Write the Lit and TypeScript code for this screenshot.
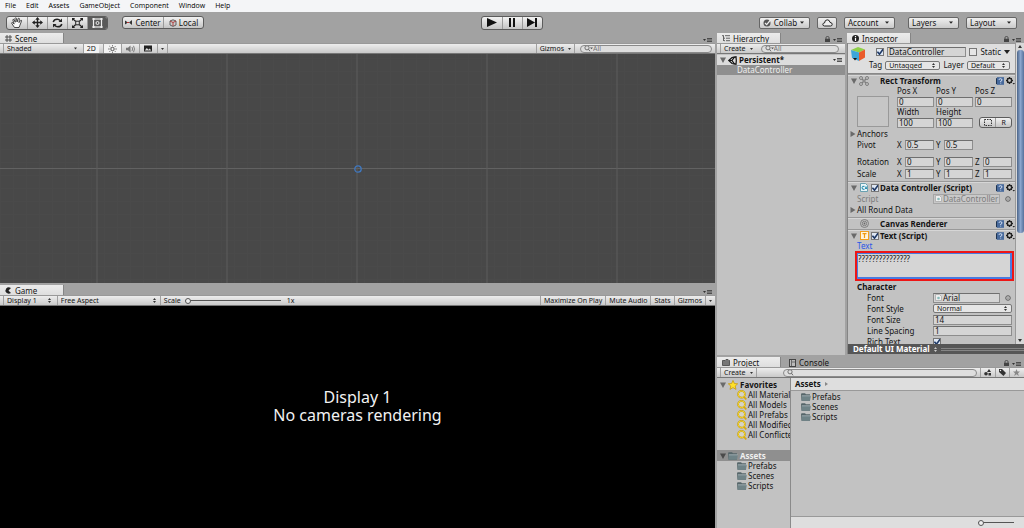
import { LitElement, html, css, svg } from "lit";
import { customElement } from "lit/decorators.js";
import { classMap } from "lit/directives/class-map.js";

const draw = (w: number, h: number, body: unknown) =>
  html`<svg class="ico" width=${w} height=${h} viewBox="0 0 ${w} ${h}" aria-hidden="true">${body}</svg>`;

const caret = () => draw(4, 3, svg`<path d="M0 .5H4L2 2.800Z" fill="#222"/>`);
const drop = () => draw(3, 2, svg`<path d="M0 0H3L1.500 2Z" fill="#333"/>`);
const fold = (open: boolean, tone = "#6a6a6a") =>
  draw(6, 6, open ? svg`<path d="M0 .5H6L3 6Z" fill=${tone}/>` : svg`<path d="M.5 0V6L5.500 3Z" fill=${tone}/>`);
const folder = () =>
  draw(10, 8, svg`<path d="M0 1.500L.5 .3H4L5 1.300H9V7.700H.5Z" fill="#56666a"/><path d="M.8 2.800H9.800L9 7.700H.5Z" fill="#6f8387"/><path d="M.8 2.800H9.700" stroke="#b4c2c4" stroke-width=".7"/>`);
const finder = () =>
  draw(10, 10, svg`<circle cx="4.500" cy="4.300" r="3.400" fill="#d6d3c4" stroke="#b8961c" stroke-width="1.700"/><circle cx="4.500" cy="4.300" r="3.400" fill="none" stroke="#f8d62a" stroke-width="1"/><path d="M6.900 6.800L9.300 9.300" stroke="#d8a80c" stroke-width="1.700"/>`);
const unity = () =>
  draw(9, 9, svg`<path d="M.8 4.500L4 1.500L8 .8L8.300 4.500L8 8.200L4 7.500Z" fill="none" stroke="#111" stroke-width="1.200"/><path d="M4 4.500H.8M4 4.500L6.500 .8M4 4.500L6.500 8.200" stroke="#111" stroke-width="1.200"/>`);
const lock = () =>
  draw(5, 6, svg`<path d="M0 2.800H5V6H0Z" fill="#444"/><path d="M1 3V1.600Q1 .5 2.500 .5T4 1.600V3" fill="none" stroke="#444" stroke-width=".9"/>`);
const menu = () =>
  draw(9, 4, svg`<path d="M0 1H3L1.500 3Z" fill="#333"/><path d="M4 .5H9M4 2H9M4 3.500H9" stroke="#444" stroke-width=".9"/>`);
const lens = () =>
  draw(9, 7, svg`<circle cx="3" cy="2.800" r="2.100" fill="none" stroke="#666" stroke-width=".9"/><path d="M4.500 4.300L6 6.300" stroke="#666"/><path d="M6 2.500H9L7.500 4.300Z" fill="#555"/>`);
const help = () =>
  draw(8, 8, svg`<path d="M0 1.500L1.500 .5V7.500L0 7Z" fill="#1e3350"/><rect x="1" y=".2" width="7" height="7.600" fill="#486a9c"/><path d="M3 2.800Q3 1.700 4.500 1.700T6 3Q6 3.700 4.700 4.200V5M4.700 5.700V6.500" fill="none" stroke="#e6f0ff" stroke-width=".9"/>`);
const gear = () =>
  draw(9, 8, svg`<circle cx="3.500" cy="3.500" r="2.200" fill="none" stroke="#222" stroke-width="1.500"/><path d="M3.500 0V1.300M3.500 5.700V7M0 3.500H1.300M5.700 3.500H7M1 1L2 2M5 5L6 6M6 1L5 2M1 6L2 5" stroke="#222" stroke-width="1"/><path d="M6.500 6H9L7.800 7.500Z" fill="#222"/>`);

const hierarchyIcon = () =>
  draw(8, 7, svg`<path d="M0 .7H2M3 .7H8M2 3.200H3M4 3.200H8M2 5.700H3M4 5.700H8M1.500 1V6" stroke="#555" stroke-width=".9" fill="none"/>`);

@customElement("app-root")
export class AppRoot extends LitElement {
  static styles = css`
    :host { display: flex; flex-direction: column; height: 100vh; overflow: hidden; background: #a2a2a2; color: #141414;
      font: 8px/10px "Noto Sans", "Open Sans", sans-serif; --line: #858585; --panel: #c2c2c2; cursor: default; }
    *, *::before { box-sizing: border-box; }
    button, input, select, textarea { font: inherit; color: inherit; margin: 0; padding: 0; border: 0; border-radius: 0; background: none; min-width: 0; outline: 0; }
    select { appearance: none; }
    .ico { flex: none; display: block; overflow: visible; }
    .grow { flex: 1; min-width: 0; }
    .menubar { display: flex; gap: 10px; height: 12px; padding: 0 5px; background: #f4f5f7; font: 7px/12px "Open Sans", sans-serif; }
    .menubar button { color: #000; white-space: nowrap; }
    .tools { display: grid; grid-template-columns: 1fr auto 1fr; align-items: center; height: 21px; padding: 0 7px 0 6px; }
    .side { display: flex; align-items: center; gap: 14px; }
    .right { justify-content: flex-end; gap: 7px; }
    .right .wide { margin-left: 6px; }
    .group { display: flex; border: 1px solid #5c5c5c; border-radius: 3px; overflow: hidden; background: linear-gradient(#f2f2f2, #c4c4c4); }
    .group button { display: flex; align-items: center; justify-content: center; gap: 2px; width: 20px; height: 12px; border-left: 1px solid #9a9a9a; }
    .group button:first-child { border-left: 0; }
    .group .on { background: #5a5a5a; }
    .group .word { width: 40px; height: 11px; }
    .push { display: flex; align-items: center; justify-content: space-between; width: 51px; height: 12px; padding: 0 5px 0 3px; border: 1px solid #666; border-radius: 2px; background: linear-gradient(#efefef, #cacaca); }
    .cloud { width: 20px; justify-content: center; padding: 0; }
    .body { flex: 1; min-height: 0; display: grid; grid-template-columns: minmax(0, 1fr) 307px; gap: 2px; }
    .column { display: grid; min-height: 0; gap: 2px; }
    .views { grid-template-rows: minmax(0, 250fr) minmax(0, 243fr); }
    .docks { grid-template-rows: minmax(0, 322fr) minmax(0, 171fr); }
    .upper { display: grid; grid-template-columns: 128px minmax(0, 1fr); gap: 2px; min-height: 0; }
    .panel { display: flex; flex-direction: column; min-width: 0; min-height: 0; overflow: hidden; }
    .tabs { display: flex; align-items: flex-end; height: 10px; flex: none; padding-right: 3px; gap: 3px; }
    .tabs > .ico { margin-bottom: 1px; }
    .tab { display: flex; align-items: center; gap: 3px; width: 64px; height: 10px; padding: 1px 0 0 5px; white-space: nowrap; }
    .tab.active { background: linear-gradient(#ececec, #dedede); border-right: 1px solid var(--line); }
    .bar { display: flex; align-items: stretch; height: 11px; flex: none; font-size: 7px; line-height: 9px; background: linear-gradient(#ededed, #c9c9c9); border-top: 1px solid #999; border-bottom: 1px solid #777; padding-left: 3px; }
    .bar > * { border-left: 1px solid #a0a0a0; white-space: nowrap; }
    .bar > .plain { border-left: 0; }
    .bar button { display: flex; align-items: center; justify-content: center; gap: 4px; padding: 0 3px; }
    .bar .pic { padding: 0 4px; }
    .bar button.lit { background: #f3f3f3; }
    .bar select, .pop { background-repeat: no-repeat; background-position: right 4px center; background-size: 3px 5px; }
    .updown { background-image: url("data:image/svg+xml,%3Csvg xmlns='http://www.w3.org/2000/svg' viewBox='0 0 3 5'%3E%3Cpath d='M0 2L1.500 0L3 2ZM0 3L1.500 5L3 3Z' fill='%23333'/%3E%3C/svg%3E"); }
    .down { background-image: url("data:image/svg+xml,%3Csvg xmlns='http://www.w3.org/2000/svg' viewBox='0 0 3 5'%3E%3Cpath d='M0 1.500H3L1.500 3.500Z' fill='%23333'/%3E%3C/svg%3E"); }
    .search { display: flex; align-items: center; height: 8px; border-radius: 5px; background: #dedede; padding-left: 3px; overflow: hidden; font-size: 7px; align-self: center; }
    .search input { flex: 1; height: 7px; line-height: 7px; }
    .search input::placeholder { color: #777; opacity: 1; }
    .shade { width: 78px; padding-left: 3px; }
    .w-display { width: 52px; padding-left: 3px; }
    .w-aspect { width: 103px; padding-left: 3px; }
    .scene { flex: 1; display: grid; place-items: center; background-color: #484848;
      background-image: linear-gradient(90deg, transparent 64px, #5c5c5c 64px, #5c5c5c 65px, transparent 65px), linear-gradient(transparent 114px, #626262 114px, #626262 115px, transparent 115px), linear-gradient(90deg, #4a4a4a 1px, transparent 1px), linear-gradient(#4a4a4a 1px, transparent 1px);
      background-size: 130px 130px, 100% 229px, 13px 13px, 13px 13px; background-position: center, center, center, center; background-repeat: repeat, no-repeat, repeat, repeat; }
    .game { flex: 1; display: grid; place-content: center; padding-bottom: 22px; background: #000; color: #f2f2f2; font-size: 16px; line-height: 18px; text-align: center; }
    .range { appearance: none; height: 8px; background: linear-gradient(#555, #555) center / 100% 1px no-repeat; }
    .range::-webkit-slider-thumb { appearance: none; width: 6px; height: 6px; border: 1px solid #555; border-radius: 50%; background: #eee; }
    .scale { display: flex; align-items: center; gap: 4px; padding-left: 3px; }
    .scale .range { width: 96px; }
    .scale output { padding-left: 2px; }
    .fill { flex: 1; background: var(--panel); }
    .row { display: flex; align-items: center; gap: 2px; height: 10px; white-space: nowrap; padding-left: 3px; flex: none; }
    .row.child { padding-left: 20px; gap: 1px; }
    .row b { font-weight: 700; }
    .scenehead { background: #dcdcdc; padding-right: 3px; margin-top: 1px; }
    .selected { background: #8f8f8f; color: #f0f0f0; }
    .inspect { flex: 1; display: flex; min-height: 0; background: var(--panel); border-left: 1px solid var(--line); }
    .props { flex: 1; min-width: 0; overflow: hidden; }
    .scroll { width: 9px; display: flex; flex-direction: column; align-items: center; justify-content: space-between; background: #d8d8d8; border-left: 1px solid #999; padding: 2px 0; }
    .thumb { width: 7px; flex: 1; margin: 2px 0 0; border-radius: 3px; background: linear-gradient(90deg, #4c6589, #8ba6cd, #56719b); }
    .rail { width: 6px; height: 106px; }
    .object { display: grid; grid-template-columns: 14px minmax(0, 1fr); gap: 4px; height: 31px; padding: 3px 5px 0 3px; background: #dedede; border-bottom: 1px solid #888; border-top: 1px solid #999; }
    .lines { display: grid; grid-template-columns: minmax(0, 1fr); grid-template-rows: 10px 10px; gap: 3px; }
    .line { display: flex; align-items: center; gap: 3px; }
    .line label { display: flex; align-items: center; gap: 3px; }
    .line .active-box { padding-left: 7px; }
    .line .layer { width: 43px; }
    .check { appearance: none; width: 8px; height: 8px; border: 1px solid #777; background: #e6e6e6; flex: none; }
    .check:checked { background: #dfe8f4 url("data:image/svg+xml,%3Csvg xmlns='http://www.w3.org/2000/svg' viewBox='0 0 8 8'%3E%3Cpath d='M1 3.500L3.200 6L7 .8' fill='none' stroke='%23203a66' stroke-width='1.700'/%3E%3C/svg%3E") center / 7px 7px no-repeat; }
    .field { height: 10px; line-height: 7px; border: 1px solid #8d8d8d; border-top-color: #6f6f6f; background: #d5d5d5; padding: 0 1px 1px; }
    .pop { height: 9px; font-size: 7px; line-height: 7px; border: 1px solid #777; border-radius: 2px; padding: 0 3px; background-color: #e6e6e6; }
    .head { display: grid; grid-template-columns: 6px 10px 8px minmax(0, 1fr) 8px 9px; gap: 2px; align-items: center; height: 12px; padding: 0 0 0 3px; font-weight: 700; border-top: 1px solid #999; box-shadow: inset 0 1px #d6d6d6; white-space: nowrap; }
    .head > :nth-child(4) { margin-left: -1px; }
    .head .ico { justify-self: center; }
    .rect { display: grid; grid-template-columns: 38px repeat(3, 37px); column-gap: 2px; padding: 0 0 0 9px; grid-template-rows: 10px 11px 10px 11px; align-items: center; }
    .rect .frame { grid-row: 2 / 5; width: 32px; height: 31px; border: 1px solid #999; align-self: start; background: #c6c6c6; }
    .rect .field { width: 37px; }
    .rect .mode { grid-column: 4; grid-row: 4; width: 33px; justify-self: end; }
    .mode button { width: 16px; height: 9px; font-size: 7px; }
    .prop { display: flex; align-items: center; height: 12px; padding-left: 9px; white-space: nowrap; }
    .prop .name { width: 40px; flex: none; }
    .prop .axis { display: flex; align-items: center; width: 39px; justify-content: space-between; padding-right: 2px; }
    .axis .field { width: 29px; }
    .foldout { padding-left: 2px; gap: 1px; height: 11px; }
    .gap { height: 5px; }
    .gap.small { height: 2px; }
    .gap.tiny { height: 1px; }
    .prop.wide-name { height: 11px; }
    .wide-name .name { width: 76px; }
    .prop.indent { padding-left: 19px; height: 11px; }
    .indent .name { width: 66px; }
    .object-field { display: flex; align-items: center; gap: 1px; width: 67px; margin-right: 5px; overflow: hidden; }
    .dim { color: #7d7d7d; }
    .dim .object-field { border-color: #a5a5a5; background: #c8c8c8; }
    .indent .pop, .indent .num { flex: none; width: 79px; }
    .text-label { display: block; padding-left: 9px; color: #2a56e8; height: 10px; line-height: 10px; }
    .alert { margin: 0 1px 0 7px; border: 2px solid #ee1616; height: 30px; display: flex; }
    .alert textarea { flex: 1; resize: none; border: 1px solid #4a7be0; border-bottom-width: 2px; border-right-width: 2px; background: #d5d5d5; line-height: 9px; padding: 0 0 1px; overflow: hidden; }
    .prop.strong { font-weight: 700; height: 11px; }
    .material { display: flex; align-items: center; gap: 4px; height: 10px; margin-bottom: 1px; padding-left: 5px; background: #565656; color: #fff; font-weight: 700; border-left: 1px solid var(--line); white-space: nowrap; flex: none; }
    .grip { flex: 1; height: 3px; border-top: 1px solid #858585; border-bottom: 1px solid #858585; }
    .project { flex: 1; display: grid; grid-template-columns: 74px minmax(0, 1fr); background: var(--panel); min-height: 0; }
    .tree { border-right: 1px solid #8a8a8a; overflow: hidden; padding-top: 1px; }
    .tree .root { margin-top: 10px; height: 11px; }
    .tree .first { height: 11px; }
    .assets { display: flex; flex-direction: column; min-height: 0; }
    .assets .row { padding-left: 10px; }
    .crumb { display: flex; align-items: center; gap: 4px; height: 13px; padding-left: 4px; background: #dedede; border-bottom: 1px solid #999; font-weight: 700; }
    .listing { flex: 1; padding-top: 1px; }
    .foot { display: flex; align-items: center; justify-content: flex-end; height: 12px; padding-right: 10px; background: #dedede; border-top: 1px solid #999; }
    .foot .range { width: 36px; }
    .bar > .search { border: 1px solid #8a8a8a; }
    .bar .find { flex: 1; margin: 0 3px 0 26px; }
    .project-bar .pic { padding: 0 3px; }
    .bar .find-scene { width: 132px; margin: 0 3px 0 5px; }
    .bar .find-h { flex: 1; margin: 0 6px 0 5px; }
  `;

  private head(title: string, icon: unknown, open: boolean | null, check = false) {
    return html`<div class="head">${open === null ? html`<i></i>` : fold(open)}${icon}
      ${check ? html`<input class="check" type="checkbox" checked aria-label="Enable ${title}">` : html`<i></i>`}
      <span>${title}</span>${help()}${gear()}</div>`;
  }

  private axes(name: string, values: string[]) {
    return html`<div class="prop"><span class="name">${name}</span>
      ${values.map((v, i) => html`<label class="axis">${"XYZ"[i]}<input class="field" .value=${v}></label>`)}</div>`;
  }

  private row(text: string, icon: unknown) {
    return html`<div class="row child">${icon}<span>${text}</span></div>`;
  }

  private topTools() {
    const c = draw(8, 7, svg`<path d="M0 1.500L3 3.500L0 5.500ZM4 3.500L7 1V6Z" fill="#333"/><path d="M2 3.500H4" stroke="#b33"/>`);
    const l = draw(8, 8, svg`<path d="M1 2L4 .8L7 2V6L4 7.400L1 6Z" fill="#ccc" stroke="#555" stroke-width=".9"/><path d="M1 2L4 3.500L7 2M4 3.500V7" fill="none" stroke="#a33" stroke-width=".9"/>`);
    const tools: [string, unknown][] = [
      ["Hand", draw(12, 11, svg`<path d="M3.500 10.500L.8 6.500Q.4 5.300 1.600 5.600L3.200 7L1.800 3Q1.900 1.900 2.900 2.500L4.300 5.200L4 1.300Q4.500 .2 5.300 1.200L6.100 5L7.200 1.400Q8 .7 8.400 1.700L8 5.600L9.800 3.300Q10.800 3.100 10.500 4.200L8.800 8.500L8 10.500Z" fill="#fafafa" stroke="#222" stroke-width=".8"/>`)],
      ["Move", draw(11, 11, svg`<path d="M5.500 1.500V9.500M1.500 5.500H9.500" stroke="#222" stroke-width="1.400"/><path d="M5.500 0L7.700 2.800H3.300ZM5.500 11L7.700 8.200H3.300ZM0 5.500L2.800 3.300V7.700ZM11 5.500L8.200 3.300V7.700Z" fill="#222"/>`)],
      ["Rotate", draw(11, 10, svg`<path d="M1.200 4Q2 1.200 5.200 1.200Q7 1.200 8.500 2.700M9.800 6Q9 8.800 5.800 8.800Q4 8.800 2.500 7.300" fill="none" stroke="#222" stroke-width="1.500"/><path d="M10 .5V4H6.500ZM1 9.500V6H4.500Z" fill="#222"/>`)],
      ["Scale", draw(11, 10, svg`<rect x="3.700" y="3.200" width="3.600" height="3.600" fill="none" stroke="#222"/><path d="M1 1L3.500 3.300M10 1L7.500 3.300M1 9L3.500 6.700M10 9L7.500 6.700" stroke="#222" stroke-width="1.200"/><path d="M0 0H3.200L0 3ZM11 0H7.800L11 3ZM0 10H3.200L0 7ZM11 10H7.800L11 7Z" fill="#222"/>`)],
      ["Rect", draw(11, 10, svg`<rect x="1.500" y="1" width="8" height="8" fill="none" stroke="#eee" stroke-width="1.200"/><circle cx="5.500" cy="5" r="1.500" fill="none" stroke="#eee"/><path d="M.5 0H2.500V2H.5ZM8.500 0H10.500V2H8.500ZM.5 8H2.500V10H.5ZM8.500 8H10.500V10H8.500Z" fill="#eee"/>`)],
    ];
    return html`<div class="tools">
      <div class="side"><div class="group">${tools.map(([n, i]) => html`<button class=${classMap({ on: n === "Rect" })} aria-label=${n}>${i}</button>`)}</div>
        <div class="group"><button class="word">${c}Center</button><button class="word">${l}Local</button></div></div>
      <div class="group">
        <button aria-label="Play">${draw(10, 9, svg`<path d="M0 0L10 4.500L0 9Z" fill="#111"/>`)}</button>
        <button aria-label="Pause">${draw(6, 9, svg`<path d="M0 0H2V9H0ZM4 0H6V9H4Z" fill="#111"/>`)}</button>
        <button aria-label="Step">${draw(10, 9, svg`<path d="M0 0L8 4.500L0 9ZM8 0H10V9H8Z" fill="#111"/>`)}</button></div>
      <div class="side right">
        <button class="push">${draw(8, 8, svg`<circle cx="4" cy="4" r="3.500" fill="#555"/><path d="M2 4L3.700 5.700L7.500 1" fill="none" stroke="#eee" stroke-width="1.200"/>`)}Collab ${caret()}</button>
        <button class="push cloud" aria-label="Services">${draw(11, 8, svg`<path d="M2.500 7Q.6 6.800 .8 5.200Q1 4 2.500 4Q2.800 1 5.200 .8Q7.600 .8 8 3.400Q10.200 3.600 10.200 5.300Q10.200 7 8.500 7Z" fill="#eee" stroke="#222"/>`)}</button>
        <button class="push">Account ${caret()}</button><button class="push wide">Layers ${caret()}</button><button class="push">Layout ${caret()}</button>
      </div></div>`;
  }

  private scene() {
    return html`<section class="panel">
      <div class="tabs"><div class="tab active">${draw(7, 7, svg`<path d="M2 0V7M5 0V7M0 2H7M0 5H7" stroke="#444" stroke-width=".9"/>`)}Scene</div><span class="grow"></span>${menu()}</div>
      <div class="bar">
        <select class="shade down" aria-label="Draw mode"><option>Shaded</option></select>
        <span class="plain">&nbsp;</span><button class="lit">2D</button><span class="plain">&nbsp;&nbsp;</span>
        <button class="lit pic" aria-label="Lighting">${draw(9, 8, svg`<circle cx="4.500" cy="4" r="1.700" fill="none" stroke="#444" stroke-width=".9"/><path d="M4.500 0V1.300M4.500 6.700V8M0 4H1.800M7.200 4H9M1.300 1L2.500 2.200M7.700 1L6.500 2.200M1.300 7L2.500 5.800M7.700 7L6.500 5.800" stroke="#666" stroke-width=".8"/>`)}</button>
        <button class="pic" aria-label="Audio">${draw(9, 8, svg`<path d="M0 2.700H2L4.500 .5V7.500L2 5.300H0Z" fill="#777"/><path d="M6 2Q7.200 4 6 6M7.500 .8Q9.500 4 7.500 7.200" fill="none" stroke="#777" stroke-width=".9"/>`)}</button>
        <button class="pic" aria-label="Effects">${draw(9, 7, svg`<rect y=".5" width="8" height="6" fill="#222"/><path d="M.8 5.500L2.800 3L4.500 4.700L5.800 3.500L7.200 5.500Z" fill="#ddd"/>`)}</button>
        <button aria-label="Effects menu">${drop()}</button>
        <span class="grow"></span>
        <button>Gizmos ${drop()}</button><span></span>
        <label class="search find-scene">${lens()}<input placeholder="All" aria-label="Search scene"></label></div>
      <div class="scene">${draw(8, 8, svg`<circle cx="4" cy="4" r="3.200" fill="none" stroke="#3f78c0" stroke-width="1.300"/>`)}</div>
    </section>`;
  }

  private game() {
    return html`<section class="panel">
      <div class="tabs"><div class="tab active">${draw(7, 7, svg`<path d="M6 1Q3 -.5 1.200 1.500Q-.3 3.500 1.200 5.500Q3 7.500 6 6L3.500 3.500Z" fill="#222"/>`)}Game</div><span class="grow"></span>${menu()}</div>
      <div class="bar">
        <select class="w-display updown" aria-label="Display"><option>Display 1</option></select><span class="plain">&nbsp;</span>
        <select class="w-aspect updown" aria-label="Aspect"><option>Free Aspect</option></select>
        <label class="scale">Scale<input class="range" type="range" min="0" max="100" value="0"><output>1x</output></label>
        <span class="grow plain"></span>
        <button>Maximize On Play</button><button>Mute Audio</button><button>Stats</button><button>Gizmos</button><button aria-label="Gizmos menu">${drop()}</button></div>
      <div class="game"><div>Display 1</div><div>No cameras rendering</div></div>
    </section>`;
  }

  private hierarchy() {
    return html`<section class="panel">
      <div class="tabs"><div class="tab active">${hierarchyIcon()}Hierarchy</div><span class="grow"></span>${lock()}${menu()}</div>
      <div class="bar"><button>Create ${drop()}</button>
        <label class="search find-h">${lens()}<input placeholder="All" aria-label="Search hierarchy"></label></div>
      <div class="fill"><div class="row scenehead">${fold(true)}${unity()}<b class="grow">Persistent*</b>${menu()}</div>
        <div class="row child selected">DataController</div></div>
    </section>`;
  }

  private inspector() {
    const pos = ["Pos X", "Pos Y", "Pos Z"];
    const anchor = draw(10, 10, svg`<g fill="none" stroke="#777" stroke-width=".9"><circle cx="2" cy="2" r="1.500"/><circle cx="8" cy="2" r="1.500"/><circle cx="2" cy="8" r="1.500"/><circle cx="8" cy="8" r="1.500"/><path d="M3 3L4 4H6L7 3M3 7L4 6H6L7 7M4 4V6M6 4V6"/></g>`);
    const script = draw(8, 9, svg`<path d="M.5 .5H5.500L7.500 2.500V8.500H.5Z" fill="#e8f4f8" stroke="#68a0b0"/><path d="M4.500 3.300Q2 2.700 2 4.800T4.500 6.300M5 4.200H7M5 5.400H7" fill="none" stroke="#1684a8"/>`);
    const page = draw(7, 7, svg`<path d="M.5 .5H4.500L6.500 2.500V6.500H.5Z" fill="#eee" stroke="#aaa" stroke-width=".8"/><circle cx="3.500" cy="4" r="1.300" fill="#8bb"/>`);
    const target = draw(6, 6, svg`<circle cx="3" cy="3" r="2.300" fill="none" stroke="#555" stroke-width=".9"/><circle cx="3" cy="3" r=".6" fill="#555"/>`);
    return html`<section class="panel">
      <div class="tabs"><div class="tab active">${draw(7, 7, svg`<circle cx="3.500" cy="3.500" r="3.500" fill="#222"/><path d="M3.500 1V2.200M3.500 3V6" stroke="#fff" stroke-width="1.200"/>`)}Inspector</div><span class="grow"></span>${lock()}${menu()}</div>
      <div class="inspect"><div class="props">
        <div class="object">${draw(14, 15, svg`<path d="M0 3L7 0L14 2.500L8 5.500Z" fill="#8fd04a"/><path d="M0 3L8 5.500V14L1 11Z" fill="#3da6d9"/><path d="M8 5.500L14 2.500V10.500L8 14Z" fill="#ea5a2a"/><path d="M2 11H6L4 13.500Z" fill="#111"/>`)}
          <div class="lines"><div class="line"><label class="active-box"><input class="check" type="checkbox" checked aria-label="Active"></label>
            <input class="field grow" .value=${"DataController"} aria-label="Name">
            <label><input class="check" type="checkbox">Static</label>${draw(6, 4, svg`<path d="M0 0H6L3 4Z" fill="#222"/>`)}</div>
          <div class="line"><label class="grow">Tag <select class="pop updown grow"><option>Untagged</option></select></label>
            <label>Layer <select class="pop updown layer"><option>Default</option></select></label></div></div></div>
        ${this.head("Rect Transform", anchor, true)}
        <div class="rect"><i></i>${pos.map((p) => html`<label for=${p}>${p}</label>`)}
          <div class="frame"></div>${pos.map((p) => html`<input class="field" id=${p} .value=${"0"}>`)}
          <label for="w">Width</label><label for="h">Height</label><i></i>
          <input class="field" id="w" .value=${"100"}><input class="field" id="h" .value=${"100"}>
          <div class="group mode"><button aria-label="Blueprint">${draw(8, 7, svg`<rect x=".5" y=".5" width="7" height="6" fill="none" stroke="#333" stroke-dasharray="1.500 1"/>`)}</button><button>R</button></div></div>
        <div class="prop foldout">${fold(false)}<span>Anchors</span></div>
        ${this.axes("Pivot", ["0.5", "0.5"])}
        <div class="gap"></div>
        ${this.axes("Rotation", ["0", "0", "0"])}${this.axes("Scale", ["1", "1", "1"])}
        <div class="gap tiny"></div>
        ${this.head("Data Controller (Script)", script, true, true)}
        <div class="prop wide-name dim"><span class="name">Script</span><span class="field object-field">${page}DataController</span>${target}</div>
        <div class="prop foldout">${fold(false)}<span>All Round Data</span></div><div class="gap small"></div>
        ${this.head("Canvas Renderer", draw(9, 9, svg`<g fill="none" stroke="#777" stroke-width=".9"><circle cx="4.500" cy="4.500" r="4"/><circle cx="4.500" cy="4.500" r="2.200"/></g><circle cx="4.500" cy="4.500" r=".9" fill="#666"/>`), null)}
        ${this.head("Text (Script)", draw(9, 9, svg`<rect x=".5" y=".5" width="8" height="8" fill="#fff4dd" stroke="#f0a020"/><path d="M2.500 2.700H6.500M4.500 2.700V7" stroke="#f09a10" stroke-width="1.200"/>`), true, true)}
        <label class="text-label" for="text">Text</label>
        <div class="alert"><textarea id="text" .value=${"???????????????"}></textarea></div>
        <div class="prop strong">Character</div>
        <div class="prop indent"><span class="name">Font</span><span class="field object-field">${page}Arial</span>${target}</div>
        <div class="prop indent"><label class="name" for="fs">Font Style</label><select id="fs" class="pop updown"><option>Normal</option></select></div>
        <div class="prop indent"><label class="name" for="size">Font Size</label><input id="size" class="field num" .value=${"14"}></div>
        <div class="prop indent"><label class="name" for="sp">Line Spacing</label><input id="sp" class="field num" .value=${"1"}></div>
        <div class="prop indent"><label class="name" for="rich">Rich Text</label><input id="rich" class="check" type="checkbox" checked></div>
      </div>
      <div class="scroll">${draw(4, 3, svg`<path d="M0 3H4L2 0Z" fill="#333"/>`)}<div class="thumb"></div><div class="rail"></div>${draw(4, 3, svg`<path d="M0 0H4L2 3Z" fill="#333"/>`)}</div></div>
      <div class="material">Default UI Material ${draw(3, 5, svg`<path d="M0 2L1.500 0L3 2ZM0 3L1.500 5L3 3Z" fill="#ccc"/>`)}<span class="grip"></span></div>
    </section>`;
  }

  private project() {
    const dirs = ["Prefabs", "Scenes", "Scripts"];
    return html`<section class="panel">
      <div class="tabs"><div class="tab active">${draw(8, 7, svg`<path d="M.5 1.500H3L4 .5H6L7 1.500H7.500V6.500H.5Z" fill="#777" stroke="#444" stroke-width=".8"/>`)}Project</div>
        <div class="tab">${draw(7, 8, svg`<rect x=".5" y=".5" width="6" height="7" fill="#bbb" stroke="#444"/><path d="M2.500 1V7M3 3H6" stroke="#555" stroke-width=".8"/>`)}Console</div><span class="grow"></span>${lock()}${menu()}</div>
      <div class="bar project-bar"><button>Create ${drop()}</button><span></span>
        <label class="search find">${draw(7, 7, svg`<circle cx="3" cy="2.800" r="2.100" fill="none" stroke="#666" stroke-width=".9"/><path d="M4.500 4.300L6 6.300" stroke="#666"/>`)}<input aria-label="Search project"></label>
        <button class="pic" aria-label="Filter by type">${draw(8, 7, svg`<path d="M5 0L7 3H3Z" fill="#333"/><circle cx="2" cy="4.800" r="1.800" fill="#333"/><rect x="4.500" y="4" width="2.500" height="2.500" fill="#333"/>`)}</button>
        <button class="pic" aria-label="Filter by label">${draw(7, 7, svg`<path d="M0 0H3L7 4L4.500 7L0 3Z" fill="#333"/><circle cx="1.500" cy="1.500" r=".7" fill="#eee"/>`)}</button>
        <button class="pic" aria-label="Save search">${draw(8, 7, svg`<path d="M3.500 0L4.500 2.500H7L5 4.200L5.800 7L3.500 5.300L1.200 7L2 4.200L0 2.500H2.500Z" fill="#888"/>`)}</button></div>
      <div class="project">
        <div class="tree"><div class="row first">${fold(true)}${draw(10, 10, svg`<path d="M5 .4L6.400 3.500L9.700 3.800L7.200 6L8 9.400L5 7.600L2 9.400L2.800 6L.3 3.800L3.600 3.500Z" fill="#ffe026" stroke="#c69a12" stroke-width=".8"/>`)}<b>Favorites</b></div>
          ${["All Materials", "All Models", "All Prefabs", "All Modified", "All Conflicted"].map((t) => this.row(t, finder()))}
          <div class="row selected root">${fold(true, "#4a4a4a")}${folder()}<b>Assets</b></div>
          ${dirs.map((t) => this.row(t, folder()))}</div>
        <div class="assets"><div class="crumb">Assets ${draw(3, 4, svg`<path d="M0 0V4L3 2Z" fill="#888"/>`)}</div>
          <div class="listing">${dirs.map((t) => this.row(t, folder()))}</div>
          <div class="foot"><input class="range" type="range" min="0" max="100" value="0" aria-label="Icon size"></div></div>
      </div></section>`;
  }

  render() {
    return html`<nav class="menubar">${["File", "Edit", "Assets", "GameObject", "Component", "Window", "Help"].map((m) => html`<button>${m}</button>`)}</nav>
      ${this.topTools()}
      <main class="body"><div class="column views">${this.scene()}${this.game()}</div>
        <div class="column docks"><div class="upper">${this.hierarchy()}${this.inspector()}</div>${this.project()}</div></main>`;
  }
}
